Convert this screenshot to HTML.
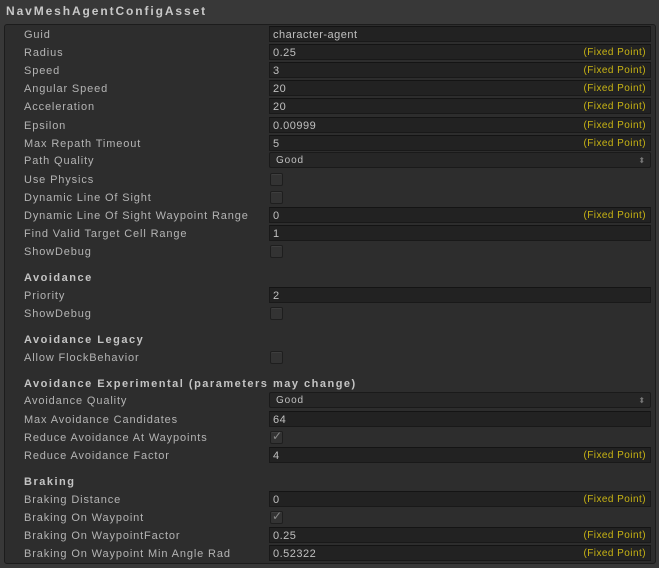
<!DOCTYPE html>
<html><head><meta charset="utf-8"><style>
*{margin:0;padding:0;box-sizing:border-box}
body{width:659px;height:568px;background:#383838;position:relative;overflow:hidden;font-family:"Liberation Sans","DejaVu Sans",sans-serif;font-size:11px;color:#b4b4b4;letter-spacing:0.87px}
.title{position:absolute;left:6px;top:4px;font-weight:bold;color:#c8c8c8;font-size:12px;letter-spacing:1.9px}
.panel{position:absolute;left:4px;top:24px;width:652px;height:540px;background:#2d2d2d;border:1px solid #1c1c1c;border-radius:3px}
.l{position:absolute;left:24px;height:16px;line-height:18px;white-space:nowrap}
.h{position:absolute;left:24px;height:16px;line-height:18px;font-weight:bold;color:#c4c4c4;white-space:nowrap;letter-spacing:1.5px}
.f{position:absolute;left:269px;width:382px;height:16px;background:#222;border:1px solid #191919;border-top-color:#141414;line-height:16px;padding-left:3px;color:#c0c0c0;letter-spacing:0.5px}
.fp{position:absolute;right:4px;top:0;color:#c8b414;font-size:10px;letter-spacing:0.45px}
.dd{position:absolute;left:269px;width:382px;height:16px;background:#262626;border:1px solid #1a1a1a;border-radius:2px;line-height:15px;padding-left:6px;font-size:10px;color:#c0c0c0}
.dd:after{content:"⬍";position:absolute;right:4px;top:0;font-size:8px;color:#777}
.cb{position:absolute;left:270px;width:13px;height:13px;background:#333;border:1px solid #1e1e1e;border-radius:2px;box-shadow:inset 0 1px 0 #3e3e3e}
.cb.c:after{content:"✓";position:absolute;left:1px;top:-3px;font-size:12px;color:#8a8a8a}
</style></head><body>
<div class="title">NavMeshAgentConfigAsset</div>
<div class="panel"></div>

<div class="l" style="top:26px">Guid</div><div class="f" style="top:26px">character-agent</div>
<div class="l" style="top:44px">Radius</div><div class="f" style="top:44px">0.25<span class="fp">(Fixed Point)</span></div>
<div class="l" style="top:62px">Speed</div><div class="f" style="top:62px">3<span class="fp">(Fixed Point)</span></div>
<div class="l" style="top:80px">Angular Speed</div><div class="f" style="top:80px">20<span class="fp">(Fixed Point)</span></div>
<div class="l" style="top:98px">Acceleration</div><div class="f" style="top:98px">20<span class="fp">(Fixed Point)</span></div>
<div class="l" style="top:117px">Epsilon</div><div class="f" style="top:117px">0.00999<span class="fp">(Fixed Point)</span></div>
<div class="l" style="top:135px">Max Repath Timeout</div><div class="f" style="top:135px">5<span class="fp">(Fixed Point)</span></div>
<div class="l" style="top:152px">Path Quality</div><div class="dd" style="top:152px">Good</div>
<div class="l" style="top:171px">Use Physics</div><div class="cb" style="top:173px"></div>
<div class="l" style="top:189px">Dynamic Line Of Sight</div><div class="cb" style="top:191px"></div>
<div class="l" style="top:207px">Dynamic Line Of Sight Waypoint Range</div><div class="f" style="top:207px">0<span class="fp">(Fixed Point)</span></div>
<div class="l" style="top:225px">Find Valid Target Cell Range</div><div class="f" style="top:225px">1</div>
<div class="l" style="top:243px">ShowDebug</div><div class="cb" style="top:245px"></div>

<div class="h" style="top:269px">Avoidance</div>
<div class="l" style="top:287px">Priority</div><div class="f" style="top:287px">2</div>
<div class="l" style="top:305px">ShowDebug</div><div class="cb" style="top:307px"></div>

<div class="h" style="top:331px">Avoidance Legacy</div>
<div class="l" style="top:349px">Allow FlockBehavior</div><div class="cb" style="top:351px"></div>

<div class="h" style="top:375px">Avoidance Experimental (parameters may change)</div>
<div class="l" style="top:392px">Avoidance Quality</div><div class="dd" style="top:392px">Good</div>
<div class="l" style="top:411px">Max Avoidance Candidates</div><div class="f" style="top:411px">64</div>
<div class="l" style="top:429px">Reduce Avoidance At Waypoints</div><div class="cb c" style="top:431px"></div>
<div class="l" style="top:447px">Reduce Avoidance Factor</div><div class="f" style="top:447px">4<span class="fp">(Fixed Point)</span></div>

<div class="h" style="top:473px">Braking</div>
<div class="l" style="top:491px">Braking Distance</div><div class="f" style="top:491px">0<span class="fp">(Fixed Point)</span></div>
<div class="l" style="top:509px">Braking On Waypoint</div><div class="cb c" style="top:511px"></div>
<div class="l" style="top:527px">Braking On WaypointFactor</div><div class="f" style="top:527px">0.25<span class="fp">(Fixed Point)</span></div>
<div class="l" style="top:545px">Braking On Waypoint Min Angle Rad</div><div class="f" style="top:545px">0.52322<span class="fp">(Fixed Point)</span></div>
</body></html>
